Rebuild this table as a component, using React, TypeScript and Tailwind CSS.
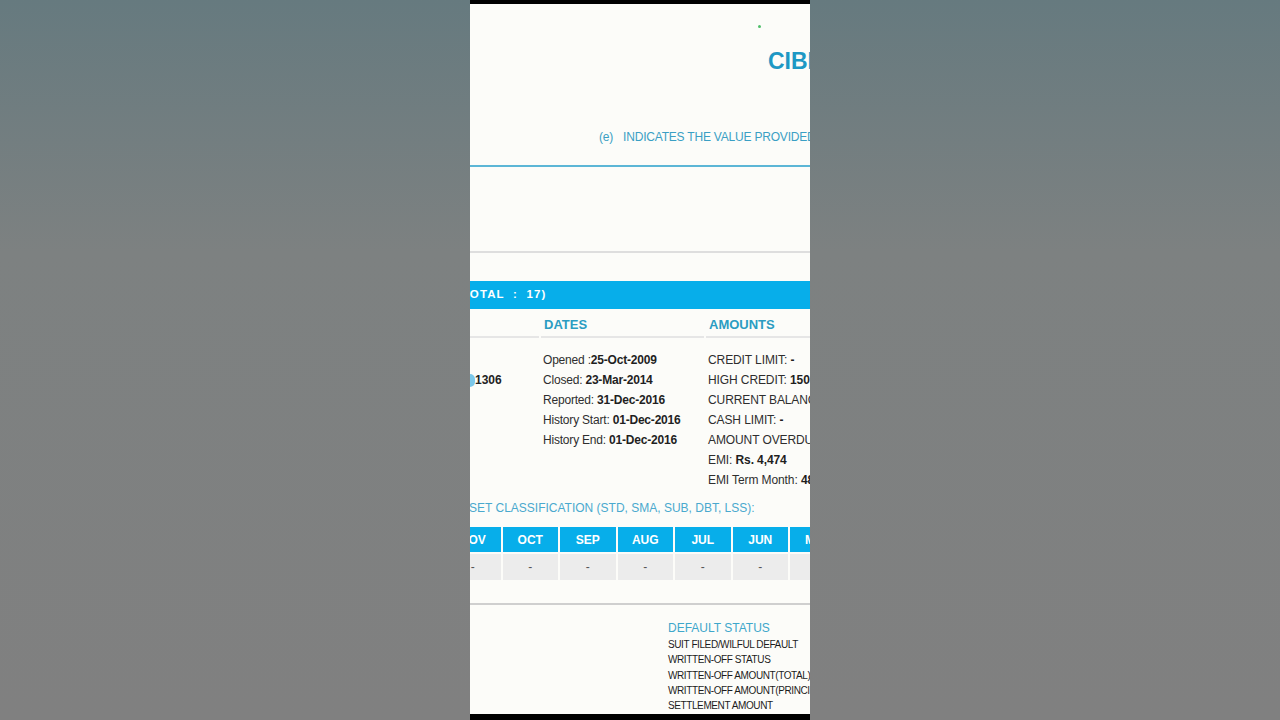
import React from 'react';

const months = ['NOV', 'OCT', 'SEP', 'AUG', 'JUL', 'JUN', 'MAY', 'APR'];

const dates: [string, string][] = [
    ['Opened :', '25-Oct-2009'],
    ['Closed: ', '23-Mar-2014'],
    ['Reported: ', '31-Dec-2016'],
    ['History Start: ', '01-Dec-2016'],
    ['History End: ', '01-Dec-2016'],
];

const amounts: [string, string][] = [
    ['CREDIT LIMIT: ', '-'],
    ['HIGH CREDIT: ', '150,000'],
    ['CURRENT BALANCE: ', '0'],
    ['CASH LIMIT: ', '-'],
    ['AMOUNT OVERDUE: ', '0'],
    ['EMI: ', 'Rs. 4,474'],
    ['EMI Term Month: ', '48'],
];

const defaultRows = [
    'SUIT FILED/WILFUL DEFAULT',
    'WRITTEN-OFF STATUS',
    'WRITTEN-OFF AMOUNT(TOTAL)',
    'WRITTEN-OFF AMOUNT(PRINCIPAL)',
    'SETTLEMENT AMOUNT',
];

const App: React.FC = () => {
    return (
        <div className="w-full h-[720px] flex justify-center bg-linear-to-b from-[#667a7f] via-[#7d8181] via-35% to-[#808080] font-['Liberation_Sans',Arial,sans-serif]">
            <div className="w-[340px] h-full flex flex-col overflow-hidden bg-[#fcfcf9] border-t-4 border-b-[6px] border-black">
                {/* report header */}
                <div className="mt-[21px] ml-[288px] w-[3px] h-[3px] rounded-full bg-[#4fbf6a] shrink-0" />
                <div className="mt-[20px] pl-[298px] h-[26px] text-[23px] leading-[26px] font-bold text-[#1e98c4] whitespace-nowrap shrink-0">
                    CIBIL REPORT
                </div>
                <div className="mt-[55px] pl-[129px] h-[16px] flex items-center text-[12px] leading-[16px] text-[#3a9fc4] whitespace-nowrap tracking-[-0.2px] shrink-0">
                    <span>(e)</span>
                    <span className="ml-[10px]">INDICATES THE VALUE PROVIDED BY THE CREDIT INSTITUTION</span>
                </div>
                <div className="mt-[20px] h-[2px] bg-[#5cb6d6] shrink-0" />

                <div className="mt-[84px] h-[2px] bg-[#dedede] shrink-0" />

                {/* accounts bar */}
                <div className="mt-[28px] h-[28px] shrink-0 flex items-center bg-[#07aeea] text-white text-[11.5px] font-bold tracking-[1.1px] whitespace-pre">
                    <span className="ml-[-13px] shrink-0">(TOTAL  :  17)</span>
                </div>

                {/* column headers */}
                <div className="flex h-[29px] shrink-0 text-[13px] font-bold text-[#2b9dc2]">
                    <div className="w-[69px] mr-[2px] shrink-0 border-b-2 border-[#e6e6e6]" />
                    <div className="w-[163px] mr-[2px] shrink-0 border-b-2 border-[#e6e6e6] flex items-center pt-[5px] pl-[3px]">
                        DATES
                    </div>
                    <div className="flex-1 border-b-2 border-[#e6e6e6] flex items-center pt-[5px] pl-[3px]">
                        AMOUNTS
                    </div>
                </div>

                {/* account details */}
                <div className="flex pt-[12px] text-[12px] leading-[20px] text-[#2e2e2e] whitespace-nowrap shrink-0">
                    <div className="w-[71px] shrink-0">
                        <div className="h-[20px]" />
                        <div className="flex items-center h-[20px]">
                            <span className="w-[10px] h-[13px] ml-[-5px] rounded-full bg-[#7cc8ea]" />
                            <span className="font-bold text-[#222]">1306</span>
                        </div>
                    </div>
                    <div className="w-[165px] shrink-0 pl-[2px] tracking-[-0.2px]">
                        {dates.map(([label, value]) => (
                            <div key={label} className="h-[20px]">
                                {label}
                                <span className="font-bold text-[#1f1f1f]">{value}</span>
                            </div>
                        ))}
                    </div>
                    <div className="shrink-0 pl-[2px] tracking-[-0.1px]">
                        {amounts.map(([label, value]) => (
                            <div key={label} className="h-[20px]">
                                {label}
                                <span className="font-bold text-[#1f1f1f]">{value}</span>
                            </div>
                        ))}
                    </div>
                </div>

                {/* asset classification */}
                <div className="mt-[10px] h-[16px] leading-[16px] text-[12px] text-[#4aa9ce] whitespace-nowrap shrink-0">
                    <span className="ml-[-17px]">ASSET CLASSIFICATION (STD, SMA, SUB, DBT, LSS):</span>
                </div>
                <div className="mt-[11px] ml-[-25px] flex flex-col gap-[2px] shrink-0">
                    <div className="flex gap-[2px]">
                        {months.map((m) => (
                            <div key={m} className="w-[55.5px] h-[25px] shrink-0 flex items-center justify-center bg-[#07aeea] text-white text-[12px] font-bold">
                                {m}
                            </div>
                        ))}
                    </div>
                    <div className="flex gap-[2px]">
                        {months.map((m) => (
                            <div key={m} className="w-[55.5px] h-[26px] shrink-0 flex items-center justify-center bg-[#ececec] text-[#555] text-[12px]">
                                -
                            </div>
                        ))}
                    </div>
                </div>

                <div className="mt-[23px] h-[2px] bg-[#cfcfcf] shrink-0" />

                {/* default status */}
                <div className="mt-[15px] pl-[198px] whitespace-nowrap">
                    <div className="h-[16px] leading-[16px] text-[12px] text-[#3ea7cb]">DEFAULT STATUS</div>
                    <div className="pt-[1px] text-[10px] leading-[15.25px] tracking-[-0.4px] text-[#1c1c1c]">
                        {defaultRows.map((r) => (
                            <div key={r}>{r}</div>
                        ))}
                    </div>
                </div>
            </div>
        </div>
    );
};

export default App;
